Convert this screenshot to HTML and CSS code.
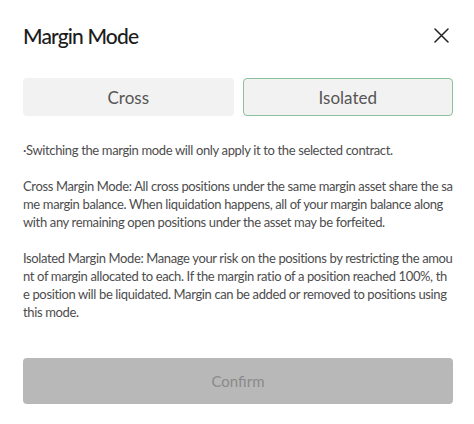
FILE: index.html
```html
<!DOCTYPE html>
<html>
<head>
<meta charset="utf-8">
<link rel="stylesheet" href="styles.css">
</head>
<body>
<div class="modal">
  <div class="header">
    <h1 class="title">Margin Mode</h1>
    <span class="close" aria-label="close">
      <svg width="15" height="15" viewBox="0 0 15 15"><path d="M1 1L14 14M14 1L1 14" stroke="#222" stroke-width="1.5" fill="none" stroke-linecap="round"/></svg>
    </span>
  </div>
  <div class="tabs">
    <div class="tab">Cross</div>
    <div class="tab active">Isolated</div>
  </div>
  <div class="desc">
    <p>·Switching the margin mode will only apply it to the selected contract.</p>
    <p>Cross Margin Mode: All cross positions under the same margin asset share the same margin balance. When liquidation happens, all of your margin balance along with any remaining open positions under the asset may be forfeited.</p>
    <p class="iso">Isolated Margin Mode: Manage your risk on the positions by restricting the amount of margin allocated to each. If the margin ratio of a position reached 100%, the position will be liquidated. Margin can be added or removed to positions using this mode.</p>
  </div>
  <div class="confirm">Confirm</div>
</div>
</body>
</html>
```
FILE: styles.css
```css
html, body { margin: 0; padding: 0; background: #fff; }
body { font-family: Lato, "Noto Sans", sans-serif; }
.modal { width: 430px; padding: 0 21px 0 23px; }
.header { display: flex; justify-content: space-between; align-items: center; height: 38px; margin-top: 16px; }
.title { margin: 0; font-size: 21px; font-weight: 500; color: #1c1c1c; letter-spacing: -0.85px; }
.close { display: flex; width: 15px; height: 15px; margin-right: 4px; }
.tabs { display: grid; grid-template-columns: 1fr 1fr; gap: 9px; margin-top: 24px; }
.tab { height: 38px; display: flex; align-items: center; justify-content: center; background: #f2f2f2; border-radius: 4px; font-size: 17px; color: #555; box-sizing: border-box; }
.tab.active { border: 1.5px solid #8cbf9c; }
.desc { margin-top: 25px; font-size: 13px; line-height: 18px; color: #4d4d4d; word-break: break-all; letter-spacing: -0.36px; }
.desc p { margin: 0 0 18px; }
.desc p:last-child { margin-bottom: 0; }
.desc .iso { letter-spacing: -0.368px; }
.confirm { margin-top: 37px; height: 46px; display: flex; align-items: center; justify-content: center; background: #b8b8b8; border-radius: 4px; color: #8a8a8a; font-size: 15px; }
```
